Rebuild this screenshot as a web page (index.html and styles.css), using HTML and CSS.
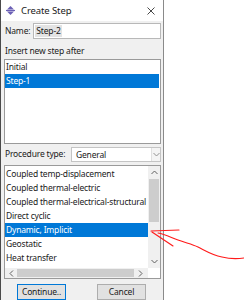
FILE: index.html
```html
<!DOCTYPE html>
<html>
<head>
<meta charset="utf-8">
<link rel="stylesheet" href="styles.css">
</head>
<body>
<div class="page">
  <div class="dialog">
    <div class="titlebar">
      <svg class="appicon" width="9" height="9" viewBox="0 0 9 9">
        <polygon points="4.5,0 8,3.6 1,3.6" fill="#6a5fb5"/>
        <polygon points="4.5,9 8,5.4 1,5.4" fill="#6a5fb5"/>
        <rect x="0" y="3.9" width="9" height="1.2" fill="#6a5fb5"/>
      </svg>
      <span class="title">Create Step</span>
      <svg class="close" width="8" height="8" viewBox="0 0 8 8">
        <path d="M0.5 0.5 L7.5 7.5 M7.5 0.5 L0.5 7.5" stroke="#333" stroke-width="0.9"/>
      </svg>
    </div>
    <div class="content">
      <div class="namerow">
        <span class="lbl">Name:</span>
        <div class="input"><span class="sel">Step-2</span></div>
      </div>
      <div class="caption">Insert new step after</div>
      <div class="list steps">
        <div class="item">Initial</div>
        <div class="item active">Step-1</div>
      </div>
      <div class="procrow">
        <span class="lbl">Procedure type:</span>
        <div class="combo">
          <span class="combotext">General</span>
          <span class="comboarrow">
            <svg width="7" height="5" viewBox="0 0 7 5"><path d="M0.5 1 L3.5 4 L6.5 1" fill="none" stroke="#888" stroke-width="0.9"/></svg>
          </span>
        </div>
      </div>
      <div class="list procs">
        <div class="procmain">
          <div class="rows">
            <div class="item">Coupled temp-displacement</div>
            <div class="item">Coupled thermal-electric</div>
            <div class="item">Coupled thermal-electrical-structural</div>
            <div class="item">Direct cyclic</div>
            <div class="item active">Dynamic, Implicit</div>
            <div class="item">Geostatic</div>
            <div class="item">Heat transfer</div>
          </div>
          <div class="vscroll">
            <div class="sbtn"><svg width="7" height="5" viewBox="0 0 7 5"><path d="M0.5 4 L3.5 1 L6.5 4" fill="none" stroke="#606060" stroke-width="1"/></svg></div>
            <div class="vthumb"></div>
            <div class="vtrack"></div>
            <div class="sbtn"><svg width="7" height="5" viewBox="0 0 7 5"><path d="M0.5 1 L3.5 4 L6.5 1" fill="none" stroke="#606060" stroke-width="1"/></svg></div>
          </div>
        </div>
        <div class="hbar">
          <div class="hscroll">
            <div class="hbtn"><svg width="5" height="7" viewBox="0 0 5 7"><path d="M4 0.5 L1 3.5 L4 6.5" fill="none" stroke="#606060" stroke-width="1"/></svg></div>
            <div class="hthumb"></div>
            <div class="hbtn"><svg width="5" height="7" viewBox="0 0 5 7"><path d="M1 0.5 L4 3.5 L1 6.5" fill="none" stroke="#606060" stroke-width="1"/></svg></div>
          </div>
          <div class="corner"></div>
        </div>
      </div>
      <div class="buttons">
        <div class="btn default">Continue..</div>
        <div class="btn">Cancel</div>
      </div>
    </div>
  </div>
  <svg class="annot" width="244" height="300" viewBox="0 0 244 300">
    <g fill="none" stroke="#ff1a1a" stroke-width="1.1" stroke-linecap="round" stroke-linejoin="round">
      <path d="M151 231 L179 230"/>
      <path d="M152 232 L173 246"/>
      <path d="M158 233 C165 234 172 238 178 240 C186 243 192 244 198 247 C206 251 212 255 222 257 C230 259 237 259 244 258"/>
    </g>
  </svg>
</div>
</body>
</html>
```

FILE: styles.css
```css
* { box-sizing: border-box; }
html, body { margin: 0; padding: 0; background: #ffffff; }
body {
  font-family: "Noto Sans", "Open Sans", sans-serif;
  font-size: 8.5px;
  letter-spacing: -0.18px;
  color: #1a1a1a;
}
.page {
  position: relative;
  width: 244px;
  height: 300px;
  display: flex;
}
.dialog {
  width: 164px;
  height: 300px;
  display: flex;
  flex-direction: column;
  border-left: 1px solid #4a4a4a;
  border-right: 1px solid #8a8a8a;
  background: #f0f0f0;
}
.titlebar {
  height: 21px;
  background: #ffffff;
  display: flex;
  align-items: center;
  padding-left: 5px;
  padding-right: 8px;
}
.appicon { flex: none; }
.title {
  margin-left: 6px;
  font-size: 9.5px;
  letter-spacing: -0.1px;
  flex: 1;
}
.close { flex: none; }
.content {
  flex: 1;
  padding: 2px 2px 0 3px;
  display: flex;
  flex-direction: column;
}
.namerow {
  display: flex;
  align-items: center;
  height: 16px;
}
.lbl { line-height: 14px; padding-left: 1px; }
.input {
  margin-left: 3px;
  flex: 1;
  height: 16px;
  background: #fff;
  border: 1px solid #b8b8b8;
  padding-left: 1px;
  display: flex;
  align-items: center;
}
.sel {
  background: #e3e3e3;
  line-height: 12px;
  padding: 0 1px;
}
.caption {
  margin-top: 4px;
  height: 15px;
  line-height: 15px;
  padding-left: 1px;
}
.list {
  background: #fff;
  border: 1px solid #9a9a9a;
}
.steps {
  margin-top: 1px;
  height: 85px;
  padding: 0 1px 0 0;
}
.item {
  height: 14px;
  line-height: 14px;
  padding-left: 1px;
  white-space: nowrap;
}
.item.active {
  background: #0078d7;
  color: #fff;
}
.procrow {
  margin-top: 2px;
  height: 16px;
  display: flex;
  align-items: center;
}
.combo {
  margin-left: auto;
  width: 90px;
  height: 15px;
  background: #fff;
  border: 1px solid #c4c4c4;
  display: flex;
  align-items: center;
}
.combotext { flex: 1; padding-left: 4px; }
.comboarrow {
  width: 9px;
  height: 13px;
  display: flex;
  align-items: center;
  justify-content: center;
  background: #f4f4f4;
  border-left: 1px solid #e0e0e0;
}
.procs {
  margin-top: 3px;
  height: 114px;
  display: flex;
  flex-direction: column;
}
.procmain {
  flex: 1;
  display: flex;
}
.rows {
  flex: 1;
  padding-top: 1px;
  overflow: hidden;
}
.vscroll {
  width: 12px;
  background: #f0f0f0;
  display: flex;
  flex-direction: column;
}
.sbtn {
  height: 13px;
  display: flex;
  align-items: center;
  justify-content: center;
}
.vthumb {
  height: 43px;
  margin: 0 1px;
  background: #cdcdcd;
}
.vtrack { flex: 1; }
.hbar {
  height: 10px;
  display: flex;
}
.hscroll {
  flex: 1;
  background: #f0f0f0;
  display: flex;
  align-items: center;
}
.hbtn {
  width: 12px;
  height: 10px;
  display: flex;
  align-items: center;
  justify-content: center;
}
.hthumb {
  width: 117px;
  height: 8px;
  background: #cdcdcd;
}
.corner { width: 12px; background: #fff; }
.buttons {
  margin-top: 5px;
  display: flex;
  padding-left: 13px;
  gap: 31px;
}
.btn {
  width: 49px;
  height: 16px;
  line-height: 14px;
  text-align: center;
  background: #e1e1e1;
  border: 1px solid #adadad;
}
.btn.default { border-color: #0078d7; }
.annot {
  position: absolute;
  left: 0;
  top: 0;
  pointer-events: none;
}
```
